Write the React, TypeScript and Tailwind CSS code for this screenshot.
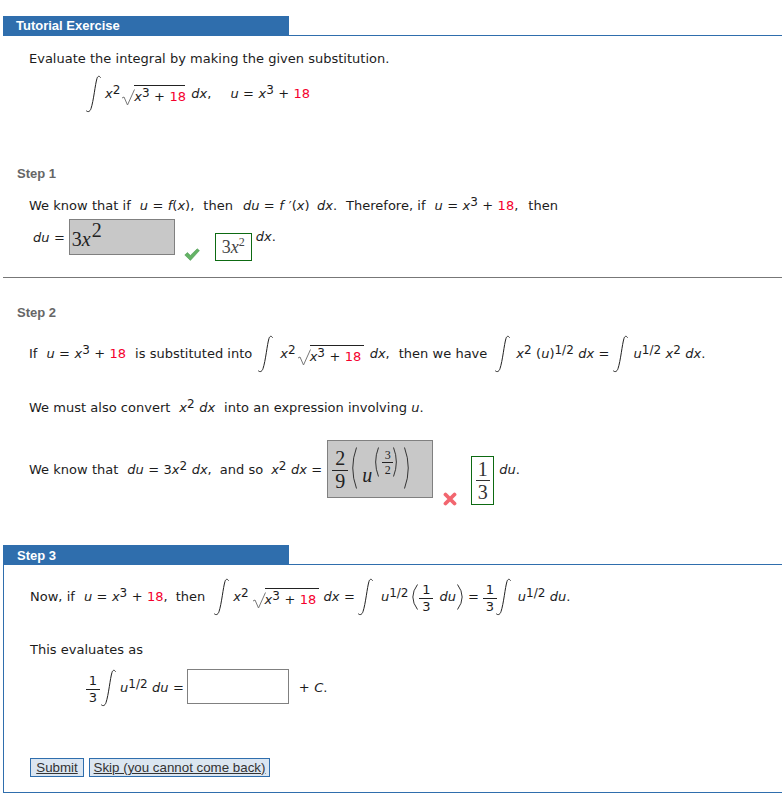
import React from "react";

type P = { children?: React.ReactNode; className?: string };

const Red = ({ children }: P) => <span className="text-[#f5002d]">{children}</span>;
const V = ({ children }: P) => <i className="italic">{children}</i>;
const S = ({ children }: P) => <sup className="text-[12px] not-italic relative -top-[4px] [word-spacing:0]">{children}</sup>;
const M = ({ children, className = "" }: P) => <span className={`[word-spacing:0.3px] ${className}`}>{children}</span>;

function Int({ className = "" }: P) {
  return (
    <svg width="18" height="38" viewBox="0 0 18 38" className={`shrink-0 ${className}`} fill="none" stroke="#222" strokeWidth="1">
      <path d="M16.5 2.6 C15.6 0.8 13.8 0.8 13 3.4 C11.2 9 9.6 26 7 33.6 C6 36.8 3.6 37.4 2.2 35.6" />
    </svg>
  );
}

function Paren({ w, h, flip = false, className = "" }: { w: number; h: number; flip?: boolean; className?: string }) {
  const d = flip ? `M0.5 0.5 Q${w + w * 0.8 - 1} ${h / 2} 0.5 ${h - 0.5}` : `M${w - 0.5} 0.5 Q${-w * 0.8 + 1} ${h / 2} ${w - 0.5} ${h - 0.5}`;
  return (
    <svg width={w} height={h} viewBox={`0 0 ${w} ${h}`} className={`shrink-0 ${className}`} fill="none" stroke="#333" strokeWidth="1">
      <path d={d} />
    </svg>
  );
}

function RootExpr({ w }: { w: number }) {
  return (
    <span className="flex items-center">
      <svg width="14" height="17" viewBox="0 0 14 17" className="shrink-0 -mr-px mt-[4px]" fill="none" stroke="#777">
        <path d="M1 9 L3 8 L6.5 16 L13.5 0.5" strokeWidth="1" />
      </svg>
      <span className="border-t border-[#222] h-[21px] flex items-end pb-px" style={{ width: w }}>
        <M><V>x</V><S>3</S> + <Red>18</Red></M>
      </span>
    </span>
  );
}

function Frac({ a, b, className = "" }: { a: string; b: string; className?: string }) {
  return (
    <span className={`inline-flex flex-col items-center leading-4 shrink-0 ${className}`}>
      <span className="border-b border-[#222] text-center w-[14px] h-[17px]">{a}</span>
      <span>{b}</span>
    </span>
  );
}

function Row({ className = "", children }: P) {
  return <div className={`flex items-center whitespace-pre leading-4 [word-spacing:0.1px] ${className}`}>{children}</div>;
}

function Check() {
  return (
    <svg width="16" height="13" viewBox="0 0 16 13" className="block">
      <path d="M0.8 7 L3.4 4.6 L6.4 7.4 L13.2 0.8 L15.4 2.6 L6.4 12.4 Z" fill="#64b366" stroke="#4f9a52" strokeWidth="0.6" />
    </svg>
  );
}

function Cross() {
  return (
    <svg width="14" height="14" viewBox="0 0 14 14" className="block">
      <path d="M2.5 2.5 L11.5 11.5 M11.5 2.5 L2.5 11.5" stroke="#f2666f" strokeWidth="3.8" strokeLinecap="round" />
    </svg>
  );
}

const serif = "font-['Liberation_Serif',serif]";
const heading = "font-bold text-[13px] font-['Liberation_Sans',Arial,sans-serif]";

export default function App() {
  return (
    <div className="w-[782px] h-[793px] overflow-hidden bg-white text-[13px] text-[#1c1c1c] font-['DejaVu_Sans',Verdana,sans-serif]">
      <div className="pt-4 pl-[3px]">
        <div className="flex h-5 border-b border-[#2f6ead]">
          <div className={`w-[286px] h-5 bg-[#2f6ead] pl-[13px] text-white leading-[19px] ${heading}`}>Tutorial Exercise</div>
        </div>

        <div className="pl-[26px]">
          <Row className="mt-[15px]">Evaluate the integral by making the given substitution.</Row>
          <Row className="mt-[8px] ml-[55px] h-[38px]">
            <Int />
            <span className="ml-[3px]"><V>x</V><S>2</S></span>
            <span className="ml-[1px] mt-[2px]"><RootExpr w={51} /></span>
            <span className="ml-[6px]"><V>dx</V>,</span>
            <M className="ml-[19px]"><V>u</V> = <V>x</V><S>3</S> + <Red>18</Red></M>
          </Row>
        </div>

        <div className={`mt-[51px] pl-[14px] h-4 leading-[19px] text-[#666] ${heading}`}>Step 1</div>

        <div className="pl-[26px]">
          <Row className="mt-[18px]">
            We know that if<M className="ml-[9px]"><V>u</V> = <V>f</V>(<V>x</V>),</M>
            <span className="ml-[9px]">then</span>
            <M className="ml-[10px]"><V>du</V> = <V>f</V><span className="ml-[5px]">′(<V>x</V>)</span><span className="ml-[3px]"> </span><V>dx</V>.</M>
            <span className="ml-[9px]">Therefore, if</span>
            <M className="ml-[9px]"><V>u</V> = <V>x</V><S>3</S> + <Red>18</Red>,</M>
            <span className="ml-[10px]">then</span>
          </Row>
          <div className="mt-[5px] h-[42px] flex items-start whitespace-pre leading-4">
            <M className="mt-[11px] ml-[4px]"><V>du</V> =</M>
            <div className={`ml-[4px] w-[106px] h-[36px] border border-[#808080] bg-[#c8c8c8] pl-[2px] pt-[3px] text-[20px] text-[#222] leading-[32px] ${serif}`}>
              3<i>x</i><sup className="text-[20px] relative -top-[9px] ml-[1px]">2</sup>
            </div>
            <span className="ml-[9px] mt-[29px]"><Check /></span>
            <div className={`ml-[15px] mt-[14px] w-[37px] h-[28px] border border-[#0d6a12] flex items-center justify-center text-[18px] text-[#444] ${serif}`}>
              3<i>x</i><sup className="text-[12px] relative -top-[5px]">2</sup>
            </div>
            <span className="ml-[4px] mt-[10px]"><V>dx</V>.</span>
          </div>
        </div>

        <div className="mt-[16px] border-t border-[#777]" />

        <div className={`mt-[25px] pl-[14px] h-4 leading-[19px] text-[#666] ${heading}`}>Step 2</div>

        <div className="pl-[26px]">
          <Row className="mt-[16px] h-[38px]">
            If<M className="ml-[9px]"><V>u</V> = <V>x</V><S>3</S> + <Red>18</Red></M>
            <span className="ml-[9px]">is substituted into</span>
            <Int className="ml-[4px]" />
            <span className="ml-[6px]"><V>x</V><S>2</S></span>
            <span className="ml-[1px] mt-[2px]"><RootExpr w={54} /></span>
            <span className="ml-[6px]"><V>dx</V>,</span>
            <span className="ml-[9px]">then we have</span>
            <Int className="ml-[6px]" />
            <M className="ml-[5px]"><V>x</V><S>2</S> (<V>u</V>)<S>1/2</S> <V>dx</V> =</M>
            <Int className="ml-[1px]" />
            <M className="ml-[5px]"><V>u</V><S>1/2</S> <V>x</V><S>2</S> <V>dx</V>.</M>
          </Row>
          <Row className="mt-[27px]">
            We must also convert<M className="ml-[9px]"><V>x</V><S>2</S> <V>dx</V></M>
            <span className="ml-[9px]">into an expression involving <V>u</V>.</span>
          </Row>
          <div className="mt-[24px] h-[65px] flex items-start whitespace-pre leading-4 [word-spacing:0.1px]">
            <span className="mt-[22px]">We know that</span>
            <M className="ml-[9px] mt-[22px]"><V>du</V> = 3<V>x</V><S>2</S> <V>dx</V>,</M>
            <span className="ml-[8px] mt-[22px]">and so</span>
            <M className="ml-[8px] mt-[22px]"><V>x</V><S>2</S> <V>dx</V> =</M>
            <div className={`ml-[5px] w-[106px] h-[58px] border border-[#808080] bg-[#c8c8c8] flex items-center text-[#222] [word-spacing:0] ${serif}`}>
              <span className="ml-[4px] inline-flex flex-col items-center text-[20px] leading-[21px] mt-[1px]">
                <span className="border-b border-[#222] w-[16px] text-center h-[23px]">2</span>
                <span>9</span>
              </span>
              <Paren w={5} h={42} className="ml-[4px] -mt-[2px]" />
              <i className="ml-[5px] mt-[12px] text-[20px] leading-none">u</i>
              <Paren w={4} h={30} className="ml-[3px] -mt-[14px]" />
              <span className="ml-[3px] -mt-[13px] inline-flex flex-col items-center text-[12px] leading-[14px]">
                <span className="border-b border-[#222] w-[11px] text-center">3</span>
                <span>2</span>
              </span>
              <Paren w={4} h={30} flip className="-mt-[14px]" />
              <Paren w={5} h={42} flip className="ml-[7px] -mt-[2px]" />
            </div>
            <span className="ml-[10px] mt-[52px]"><Cross /></span>
            <div className={`ml-[14px] mt-[16px] w-[23px] h-[49px] border border-[#0d6a12] flex flex-col items-center justify-center text-[20px] text-[#333] leading-[22px] ${serif}`}>
              <span className="border-b border-[#333] w-[14px] text-center">1</span>
              <span>3</span>
            </div>
            <span className="ml-[5px] mt-[22px]"><V>du</V>.</span>
          </div>
        </div>

        <div className="mt-[40px] flex h-5 border-b border-[#2f6ead]">
          <div className={`w-[286px] h-5 bg-[#2f6ead] pl-[14px] text-white leading-[21px] ${heading}`}>Step 3</div>
        </div>

        <div className="border-l border-b border-[#2f6ead] pl-[26px] pt-[13px] h-[228px]">
          <Row className="h-[38px]">
            Now, if<M className="ml-[9px]"><V>u</V> = <V>x</V><S>3</S> + <Red>18</Red>,</M>
            <span className="ml-[8px]">then</span>
            <Int className="ml-[7px]" />
            <span className="ml-[3px]"><V>x</V><S>2</S></span>
            <span className="ml-[3px] mt-[2px]"><RootExpr w={54} /></span>
            <span className="ml-[5px]"><M><V>dx</V> =</M></span>
            <Int className="ml-[1px]" />
            <span className="ml-[7px]"><V>u</V><S>1/2</S></span>
            <Paren w={6} h={26} className="ml-[4px]" />
            <Frac a="1" b="3" className="ml-[1px] mt-[2px]" />
            <span className="ml-[6px]"><V>du</V></span>
            <Paren w={6} h={26} flip className="ml-[1px]" />
            <span className="ml-[5px]">=</span>
            <Frac a="1" b="3" className="ml-[4px] mt-[2px]" />
            <Int className="-ml-[3px]" />
            <M className="ml-[6px]"><V>u</V><S>1/2</S> <V>du</V>.</M>
          </Row>
          <Row className="mt-[26px]">This evaluates as</Row>
          <Row className="mt-[11px] h-[38px] ml-[56px]">
            <Frac a="1" b="3" className="mt-[2px]" />
            <Int className="-ml-[1px]" />
            <M className="ml-[3px]"><V>u</V><S>1/2</S> <V>du</V> =</M>
            <div className="ml-[3px] w-[102px] h-[35px] border border-[#808080] bg-white -mt-[4px]" />
            <M className="ml-[10px]">+ <V>C</V>.</M>
          </Row>
          <div className="mt-[51px] flex gap-[5px] text-[13.33px] text-[#333] font-['Liberation_Sans',Arial,sans-serif]">
            <button className="h-[19px] w-[54px] border border-[#2f6ead] bg-[#dbe6f1] leading-[16px] underline whitespace-nowrap">Submit</button>
            <button className="h-[19px] w-[181px] border border-[#2f6ead] bg-[#dbe6f1] leading-[16px] underline whitespace-nowrap">Skip (you cannot come back)</button>
          </div>
        </div>
      </div>
    </div>
  );
}
